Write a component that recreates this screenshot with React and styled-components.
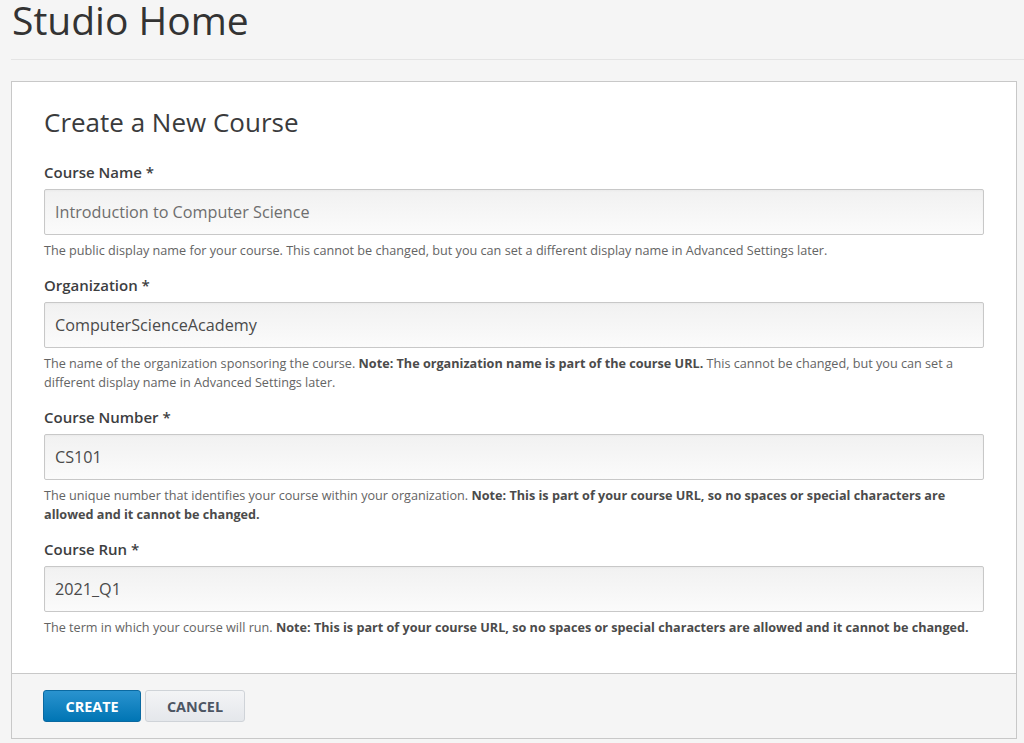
import React from "react";
import styled, { createGlobalStyle } from "styled-components";

const Global = createGlobalStyle`
  html, body { margin: 0; padding: 0; background: #f5f5f5; }
  body { font-family: "Open Sans", "Noto Sans", sans-serif; color: #333; }
  * { box-sizing: border-box; }
`;

const Page = styled.div`
  width: 1024px;
  min-height: 743px;
`;

const Header = styled.header`
  margin-left: 11px;
  height: 60px;
  border-bottom: 1px solid #e4e4e4;
`;

const Title = styled.h1`
  margin: 0;
  padding-left: 1px;
  font-size: 39px;
  line-height: 40px;
  font-weight: 400;
  color: #333;
`;

const Card = styled.form`
  margin: 21px 0 0 11px;
  width: 1006px;
  background: #fff;
  border: 1px solid #c8c8c8;
`;

const Body = styled.div`
  padding: 23.6px 32px 37px 32px;
`;

const Heading = styled.h2`
  margin: 0 0 24.4px 0;
  font-size: 26px;
  line-height: 32px;
  font-weight: 400;
  color: #3a3b3c;
`;

const Field = styled.div`
  display: flex;
  flex-direction: column;
  & + & { margin-top: 16.2px; }
`;

const Label = styled.label`
  font-size: 15px;
  line-height: 20px;
  font-weight: 600;
  color: #3d3e3f;
  margin-bottom: 7px;
`;

const Input = styled.input`
  width: 940px;
  height: 46px;
  padding: 0 10px;
  border: 1px solid #c8c8c8;
  border-radius: 2px;
  background: linear-gradient(to bottom, #f1f1f1 0%, #fbfbfb 100%);
  box-shadow: inset 0 1px 2px rgba(0, 0, 0, 0.03);
  font-family: "Open Sans", "Noto Sans", sans-serif;
  font-size: 16.2px;
  color: #4a4a4a;
  outline: none;
  &::placeholder { color: #6e6e6e; opacity: 1; }
`;

const Help = styled.p`
  margin: 6px 0 0 0;
  font-size: 12.65px;
  line-height: 18.3px;
  color: #646464;
  max-width: 940px;
  strong { font-weight: 700; color: #4b4b4b; }
`;

const Footer = styled.div`
  display: flex;
  gap: 4px;
  padding: 16px 32px 16px 31px;
  background: #f5f5f5;
  border-top: 1px solid #c8c8c8;
`;

const Button = styled.button`
  height: 32px;
  padding: 0;
  width: ${(p) => (p.$primary ? "98px" : "100px")};
  border-radius: 3px;
  font-family: "Open Sans", "Noto Sans", sans-serif;
  font-size: 14.4px;
  font-weight: 700;
  text-transform: uppercase;
  cursor: pointer;
  border: 1px solid ${(p) => (p.$primary ? "#0a69a1" : "#cfd3d8")};
  color: ${(p) => (p.$primary ? "#fff" : "#4c5563")};
  background: ${(p) =>
    p.$primary
      ? "linear-gradient(to bottom, #2a93cf 0%, #0075b4 100%)"
      : "linear-gradient(to bottom, #f3f4f6 0%, #e4e7eb 100%)"};
`;

const fields = [
  {
    id: "name",
    label: "Course Name *",
    placeholder: "Introduction to Computer Science",
    help: <>The public display name for your course. This cannot be changed, but you can set a different display name in Advanced Settings later.</>,
  },
  {
    id: "org",
    label: "Organization *",
    value: "ComputerScienceAcademy",
    help: (
      <>
        The name of the organization sponsoring the course. <strong>Note: The organization name is part of the course URL.</strong> This cannot be changed, but you can set a different display name in Advanced Settings later.
      </>
    ),
  },
  {
    id: "number",
    label: "Course Number *",
    value: "CS101",
    help: (
      <>
        The unique number that identifies your course within your organization. <strong>Note: This is part of your course URL, so no spaces or special characters are allowed and it cannot be changed.</strong>
      </>
    ),
  },
  {
    id: "run",
    label: "Course Run *",
    value: "2021_Q1",
    help: (
      <>
        The term in which your course will run. <strong>Note: This is part of your course URL, so no spaces or special characters are allowed and it cannot be changed.</strong>
      </>
    ),
  },
];

export default function App() {
  return (
    <Page>
      <Global />
      <Header>
        <Title>Studio Home</Title>
      </Header>
      <Card onSubmit={(e) => e.preventDefault()}>
        <Body>
          <Heading>Create a New Course</Heading>
          {fields.map((f) => (
            <Field key={f.id}>
              <Label htmlFor={f.id}>{f.label}</Label>
              <Input id={f.id} placeholder={f.placeholder} defaultValue={f.value} />
              <Help>{f.help}</Help>
            </Field>
          ))}
        </Body>
        <Footer>
          <Button type="submit" $primary>Create</Button>
          <Button type="button">Cancel</Button>
        </Footer>
      </Card>
    </Page>
  );
}
